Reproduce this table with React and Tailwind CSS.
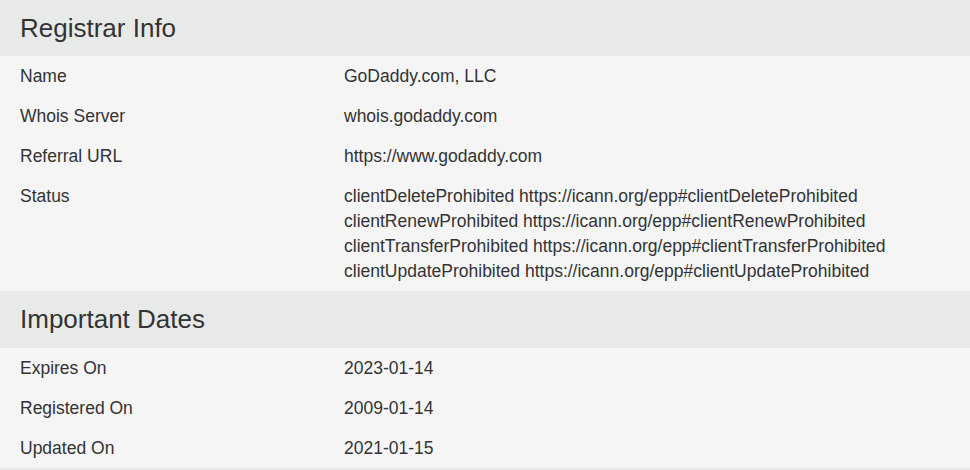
const SECTIONS = [
  {
    title: 'Registrar Info',
    rows: [
      { label: 'Name', value: ['GoDaddy.com, LLC'] },
      { label: 'Whois Server', value: ['whois.godaddy.com'] },
      { label: 'Referral URL', value: ['https://www.godaddy.com'] },
      {
        label: 'Status',
        value: [
          'clientDeleteProhibited https://icann.org/epp#clientDeleteProhibited',
          'clientRenewProhibited https://icann.org/epp#clientRenewProhibited',
          'clientTransferProhibited https://icann.org/epp#clientTransferProhibited',
          'clientUpdateProhibited https://icann.org/epp#clientUpdateProhibited',
        ],
      },
    ],
  },
  {
    title: 'Important Dates',
    rows: [
      { label: 'Expires On', value: ['2023-01-14'] },
      { label: 'Registered On', value: ['2009-01-14'] },
      { label: 'Updated On', value: ['2021-01-15'] },
    ],
  },
]

export default function App() {
  return (
    <div className="w-[970px] h-[470px] overflow-hidden bg-[#f5f5f5] text-[#333] font-['Liberation_Sans',Arial,sans-serif]">
      {SECTIONS.map((section, i) => (
        <div key={section.title}>
          <div className={`${i === 0 ? 'h-[56px]' : 'h-[57px]'} bg-[#e8e9e9] pl-5 flex items-center text-[26px] leading-none pb-px`}>
            {section.title}
          </div>
          {section.rows.map(row => (
            <div key={row.label} className="flex py-[7.5px] text-[17.5px] leading-[25px]">
              <div className="w-[344px] pl-5 shrink-0">{row.label}</div>
              <div>
                {row.value.map(v => <div key={v}>{v}</div>)}
              </div>
            </div>
          ))}
        </div>
      ))}
      <div className="h-[2px] bg-[#e8e9e9]" />
    </div>
  )
}
